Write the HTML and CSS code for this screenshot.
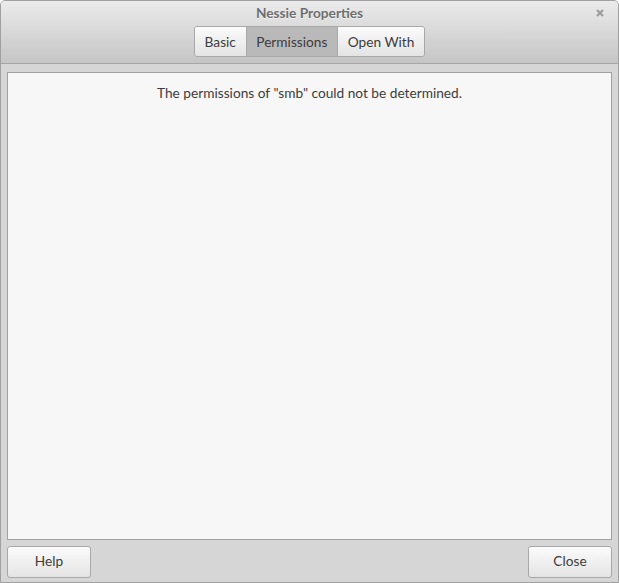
FILE: index.html
```html
<!DOCTYPE html>
<html lang="en">

<head>
    <meta charset="utf-8">
    <title>Nessie Properties</title>
    <link rel="stylesheet" href="styles.css">
</head>

<body>
    <div class="window">
        <header class="titlebar">
            <p class="title">Nessie Properties</p>
            <span class="luk">
                <svg width="8" height="8" viewBox="0 0 8 8">
                    <path d="M1 1 L7 7 M7 1 L1 7" stroke="#9a9a9a" stroke-width="2" />
                </svg>
            </span>
            <nav class="tabs">
                <button class="tab">Basic</button>
                <button class="tab valgt">Permissions</button>
                <button class="tab">Open With</button>
            </nav>
        </header>

        <main class="content">
            <p>The permissions of "smb" could not be determined.</p>
        </main>

        <footer class="knapper">
            <button class="knap">Help</button>
            <button class="knap">Close</button>
        </footer>
    </div>
</body>

</html>
```

FILE: styles.css
```css
body {
    margin: 0;
    font-family: Lato, "Liberation Sans", sans-serif;
    font-size: 13.7px;
    color: #3c3c3c;
}

.window {
    width: 619px;
    height: 583px;
    box-sizing: border-box;
    border: 1px solid #a0a0a0;
    border-radius: 5px 5px 0 0;
    background-color: #d6d6d6;
    display: flex;
    flex-direction: column;
    overflow: hidden;
}

.titlebar {
    position: relative;
    flex-shrink: 0;
    height: 62px;
    border-bottom: 1px solid #a6a6a6;
    background: linear-gradient(#ebebeb, #c5c5c5);
    display: flex;
    flex-direction: column;
    align-items: center;
}

.title {
    margin: 3px 0 0;
    height: 22px;
    font-weight: bold;
    color: #6f6f6f;
    text-shadow: 0 1px 0 rgba(255, 255, 255, .5);
}

.luk {
    position: absolute;
    top: 8px;
    right: 14px;
    display: flex;
}

.tabs {
    display: flex;
    border: 1px solid #a8a8a8;
    border-radius: 3px;
    overflow: hidden;
}

.tab {
    font: inherit;
    color: #3c3c3c;
    height: 29px;
    padding: 0 9.7px 1px;
    border: none;
    border-left: 1px solid #a8a8a8;
    background: linear-gradient(#fbfbfb, #e4e4e4);
}

.tab:first-child {
    border-left: none;
}

.tab.valgt {
    background: #b9b9b9;
}

.content {
    flex: 1;
    margin: 8px 6px 0;
    border: 1px solid #a0a0a0;
    background-color: #f7f7f7;
}

.content p {
    margin: 11px 0 0;
    text-align: center;
}

.knapper {
    flex-shrink: 0;
    display: flex;
    justify-content: space-between;
    padding: 6px 6px 4px;
}

.knap {
    font: inherit;
    color: #3c3c3c;
    width: 84px;
    height: 32px;
    padding: 0 0 3px;
    border: 1px solid #a8a8a8;
    border-radius: 3px;
    background: linear-gradient(#fbfbfb, #e4e4e4);
}
```
